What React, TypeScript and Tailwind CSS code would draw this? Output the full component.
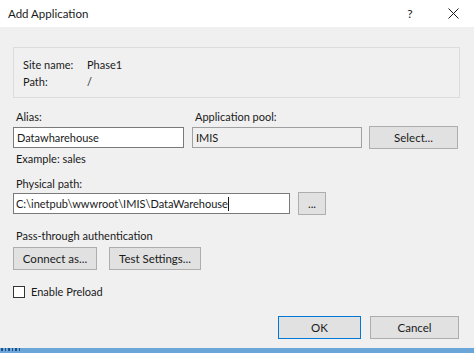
import { Fragment } from 'react'

const font = { fontFamily: 'Lato, "Open Sans", sans-serif' }

function Btn({ label, w, primary }: { label: string; w: string; primary?: boolean }) {
  return (
    <div
      className={`${w} h-[23px] flex items-center justify-center bg-[#e1e1e1] text-[11.5px] text-[#1a1a1a] border ${
        primary ? 'border-[#0078d7]' : 'border-[#adadad]'
      }`}
    >
      {label}
    </div>
  )
}

export default function App() {
  return (
    <div className="w-[474px] h-[353px] bg-[#f0f0f0] flex flex-col overflow-hidden text-[#1a1a1a] text-[11px]" style={font}>
      {/* Title bar */}
      <div className="h-[27px] bg-white flex items-center pl-[8px] text-[11.5px]">
        <span>Add Application</span>
        <span className="ml-auto w-[16px] text-center text-[12px]">?</span>
        <span className="ml-[27px] mr-[13px] w-[16px] flex justify-center">
          <svg width="11" height="11" viewBox="0 0 11 11">
            <path d="M0.5 0.5 L10.5 10.5 M10.5 0.5 L0.5 10.5" stroke="#1a1a1a" strokeWidth="1" />
          </svg>
        </span>
      </div>

      <div className="flex-1 flex flex-col pl-[13px] pr-[14px] pt-[20px] leading-[17px]">
        {/* Site info group */}
        <div className="w-[447px] h-[51px] border border-[#dcdcdc] flex flex-col justify-center pl-[9px]">
          <div className="grid grid-cols-[64px_1fr]">
            {[
              ['Site name:', 'Phase1'],
              ['Path:', '/'],
            ].map(([k, v]) => (
              <Fragment key={k}>
                <span>{k}</span>
                <span>{v}</span>
              </Fragment>
            ))}
          </div>
        </div>

        {/* Alias + pool */}
        <div className="flex mt-[10px]">
          <div className="flex flex-col w-[171px]">
            <span className="pl-[3px]">Alias:</span>
            <div className="mt-[2px] h-[21px] bg-white border border-[#7a7a7a] flex items-center pl-[3px]">Datawharehouse</div>
            <span className="pl-[3px] mt-[2px]">Example: sales</span>
          </div>
          <div className="flex flex-col w-[170px] ml-[8px]">
            <span className="pl-[3px]">Application pool:</span>
            <div className="mt-[2px] h-[21px] bg-[#f0f0f0] border border-[#a0a0a0] flex items-center pl-[3px]">IMIS</div>
          </div>
          <div className="ml-[7px] mt-[18px]">
            <Btn label="Select..." w="w-[89px]" />
          </div>
        </div>

        {/* Physical path */}
        <span className="pl-[3px] mt-[8px]">Physical path:</span>
        <div className="flex items-center">
          <div className="w-[277px] h-[21px] bg-white border border-[#7a7a7a] flex items-center pl-[2px]">
            C:\inetpub\wwwroot\IMIS\DataWarehouse
            <span className="w-px h-[14px] bg-[#1a1a1a]" />
          </div>
          <div className="ml-[8px]">
            <Btn label="..." w="w-[28px]" />
          </div>
        </div>

        {/* Pass-through authentication */}
        <span className="pl-[3px] mt-[12px]">Pass-through authentication</span>
        <div className="flex gap-[12px] mt-[3px]">
          <Btn label="Connect as..." w="w-[84px]" />
          <Btn label="Test Settings..." w="w-[92px]" />
        </div>

        {/* Checkbox */}
        <div className="flex items-center mt-[13px]">
          <div className="w-[12px] h-[12px] bg-white border border-[#333]" />
          <span className="ml-[6px]">Enable Preload</span>
        </div>

        {/* OK / Cancel */}
        <div className="flex justify-end gap-[9px] mt-[16px] pr-[1px]">
          <Btn label="OK" w="w-[83px]" primary />
          <Btn label="Cancel" w="w-[89px]" />
        </div>
      </div>

      {/* bottom strip */}
      <div className="h-[5px] bg-[#6aa6d8] flex items-start">
        <div className="flex gap-[2px] pl-[1px]">
          {[0, 1, 2, 3, 4, 5].map(i => (
            <span key={i} className="w-[1.5px] h-[3px] bg-[#1f4f86]" />
          ))}
        </div>
      </div>
    </div>
  )
}
